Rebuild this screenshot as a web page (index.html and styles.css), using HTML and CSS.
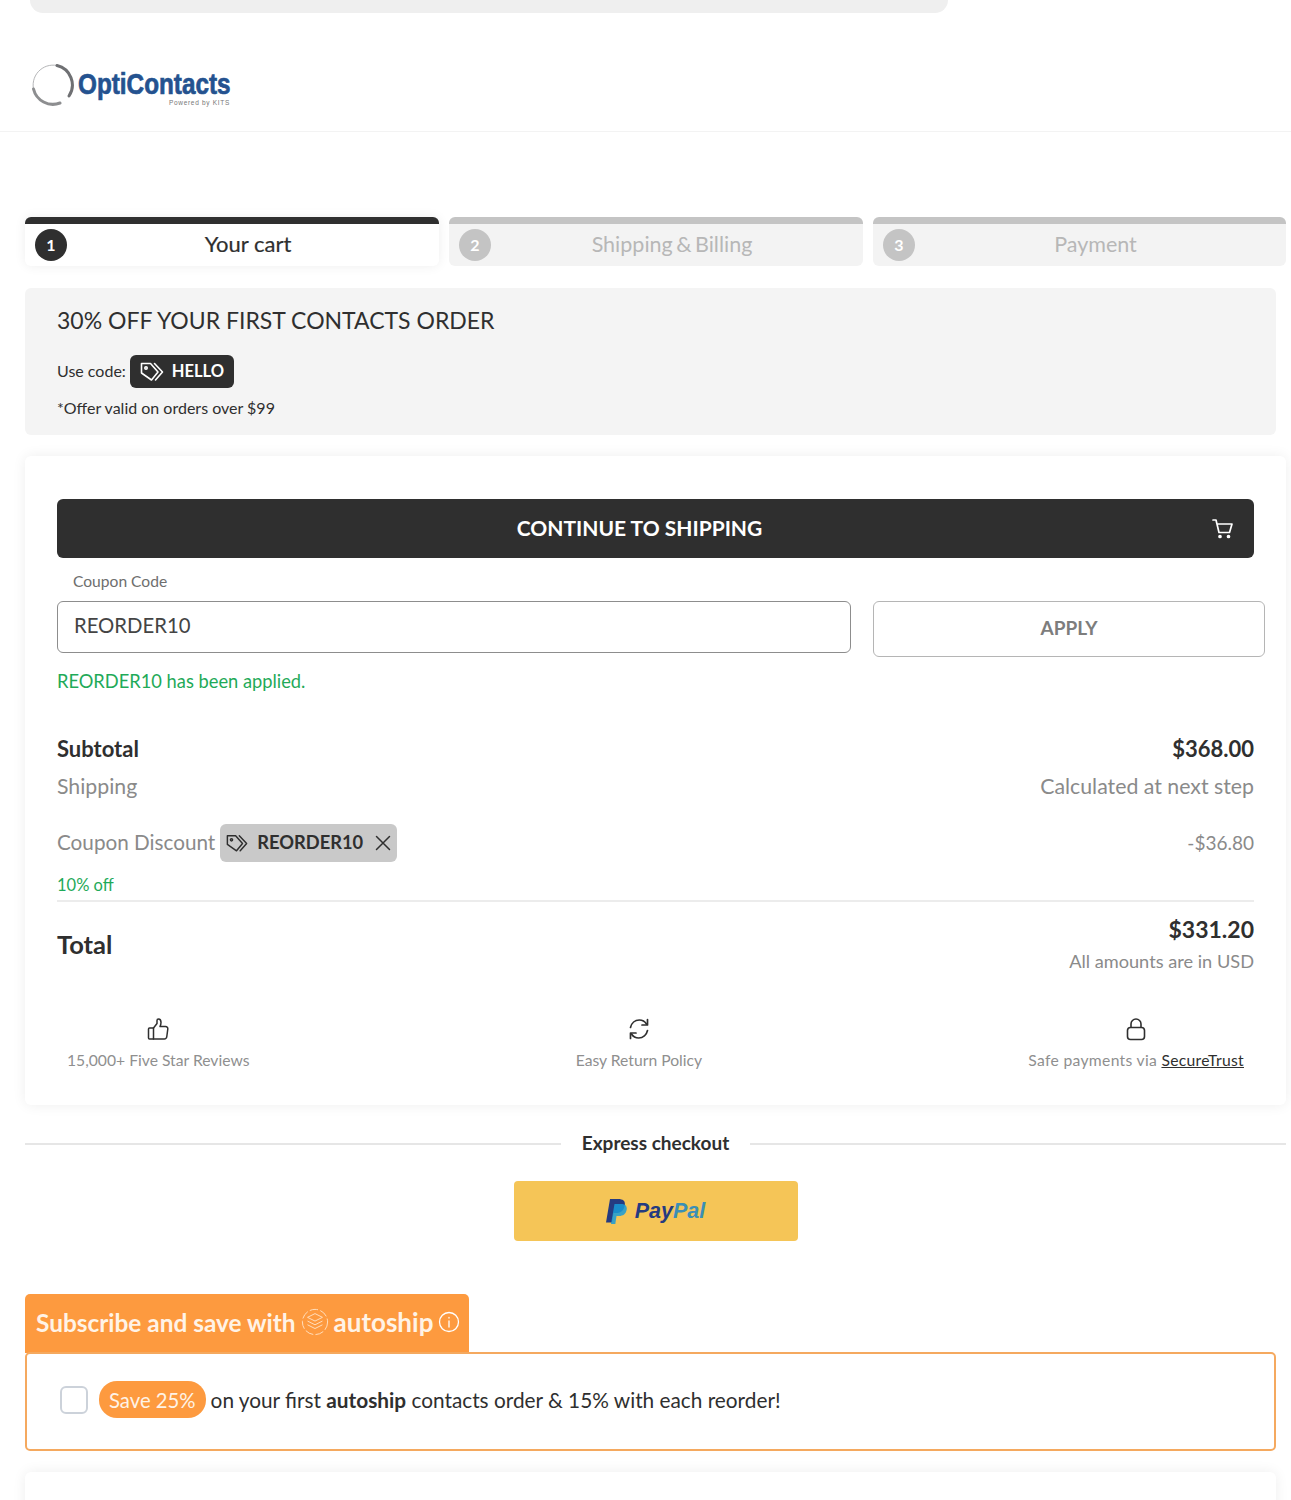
FILE: index.html
```html
<!DOCTYPE html>
<html lang="en">
<head>
  <meta charset="UTF-8" />
  <title>Your cart</title>
  <link rel="stylesheet" href="styles.css">
</head>
<body>
  <div class="top-pill"></div>

  <header class="site-header">
    <div class="logo">
      <svg class="logo-ring" width="44" height="44" viewBox="0 0 44 44" fill="none">
        <path d="M3 28 A20 20 0 0 1 26 2.500" stroke="#b5b6b8" stroke-width="1"/>
        <path d="M26 2.500 A20 20 0 0 1 38 33" stroke="#6f7073" stroke-width="3" stroke-linecap="round"/>
        <path d="M29 40 A20 20 0 0 1 2.500 26" stroke="#8d8e90" stroke-width="3" stroke-linecap="round"/>
      </svg>
      <div class="logo-text">
        <div class="logo-name">OptiContacts</div>
        <div class="logo-sub">Powered by KITS</div>
      </div>
    </div>
  </header>

  <main class="main">
    <div class="steps">
      <div class="step active"><span class="step-num">1</span><span class="step-label">Your cart</span></div>
      <div class="step"><span class="step-num">2</span><span class="step-label">Shipping &amp; Billing</span></div>
      <div class="step"><span class="step-num">3</span><span class="step-label">Payment</span></div>
    </div>

    <section class="promo">
      <h2 class="promo-title">30% OFF YOUR FIRST CONTACTS ORDER</h2>
      <div class="promo-code">
        <span class="use-code">Use code:</span>
        <span class="code-chip">
          <svg class="tag-icon" width="24" height="20" viewBox="0 0 24 20" fill="none" stroke="currentColor" stroke-width="1.600" stroke-linejoin="round" stroke-linecap="round">
            <path d="M1.500 1.500h9l7.500 8.500-6.500 8-10-7z"/>
            <path d="M14.500 1.500l8 8.500-7 8"/>
            <circle cx="6" cy="6" r="1.200"/>
          </svg>
          <span class="chip-text">HELLO</span>
        </span>
      </div>
      <p class="promo-note">*Offer valid on orders over $99</p>
    </section>

    <section class="card">
      <button class="continue-btn">
        CONTINUE TO SHIPPING
        <svg class="cart-icon" width="22" height="22" viewBox="0 0 22 22" fill="none" stroke="#fff" stroke-width="1.700" stroke-linecap="round" stroke-linejoin="round">
          <path d="M1 2h3l3 12.500h10.500L20 6H5"/>
          <circle cx="8" cy="18.500" r="1" fill="#fff"/>
          <circle cx="16.500" cy="18.500" r="1" fill="#fff"/>
        </svg>
      </button>

      <label class="coupon-label">Coupon Code</label>
      <div class="coupon-row">
        <div class="coupon-input">REORDER10</div>
        <button class="apply-btn">APPLY</button>
      </div>
      <p class="coupon-ok">REORDER10 has been applied.</p>

      <div class="line subtotal"><span>Subtotal</span><span>$368.00</span></div>
      <div class="line shipping"><span>Shipping</span><span>Calculated at next step</span></div>
      <div class="line discount">
        <div class="discount-left">
          <span class="discount-label">Coupon Discount</span>
          <span class="applied-chip">
            <svg class="tag-icon" width="22" height="19" viewBox="0 0 24 20" fill="none" stroke="currentColor" stroke-width="1.600" stroke-linejoin="round" stroke-linecap="round">
              <path d="M1.500 1.500h9l7.500 8.500-6.500 8-10-7z"/>
              <path d="M14.500 1.500l8 8.500-7 8"/>
              <circle cx="6" cy="6" r="1.200"/>
            </svg>
            <span class="applied-code">REORDER10</span>
            <svg width="16" height="16" viewBox="0 0 16 16" stroke="currentColor" stroke-width="1.500" stroke-linecap="round"><path d="M1.500 1.500l13 13M14.500 1.500l-13 13"/></svg>
          </span>
        </div>
        <span class="discount-amount">-$36.80</span>
      </div>
      <div class="off-note">10% off</div>

      <div class="total">
        <span class="total-label">Total</span>
        <div class="total-right">
          <div class="total-amount">$331.20</div>
          <div class="total-note">All amounts are in USD</div>
        </div>
      </div>

      <div class="trust">
        <div class="trust-item">
          <svg width="24" height="24" viewBox="0 0 24 24" fill="none" stroke="#2f2f2f" stroke-width="1.500" stroke-linejoin="round" stroke-linecap="round">
            <path d="M7.500 11v11H3.500a1 1 0 0 1-1-1v-9a1 1 0 0 1 1-1z"/>
            <path d="M7.500 11l3.500-4.500V3.500c0-1 .7-1.500 1.500-1.500 1.500 0 2.500 1.500 2.500 3.500 0 1.500-.5 3-1 4h5.500c1.500 0 2.500 1 2.300 2.500l-1 7.500c-.2 1.500-1 2.500-2.500 2.500H7.500"/>
          </svg>
          <span>15,000+ Five Star Reviews</span>
        </div>
        <div class="trust-item">
          <svg width="24" height="24" viewBox="0 0 24 24" fill="none" stroke="#2f2f2f" stroke-width="1.700" stroke-linejoin="round" stroke-linecap="round">
            <path d="M3.500 10.500C4.500 6 8 3 12.300 3c3.200 0 5.700 1.600 7.200 4"/>
            <path d="M20.500 2.500V8h-5.500"/>
            <path d="M20.500 13.500C19.500 18 16 21 11.700 21c-3.200 0-5.700-1.600-7.200-4"/>
            <path d="M3.500 21.500V16H9"/>
          </svg>
          <span>Easy Return Policy</span>
        </div>
        <div class="trust-item">
          <svg width="24" height="24" viewBox="0 0 24 24" fill="none" stroke="#2f2f2f" stroke-width="1.600" stroke-linejoin="round">
            <rect x="3.500" y="10.500" width="17" height="12" rx="3"/>
            <path d="M7 10.500V7a5 5 0 0 1 10 0v3.500"/>
          </svg>
          <span class="trust-safe">Safe payments via <a href="#" class="trust-link">SecureTrust</a></span>
        </div>
      </div>
    </section>

    <div class="express"><span>Express checkout</span></div>

    <button class="paypal-btn">
      <svg width="21" height="25" viewBox="0 0 21 25">
        <path d="M4 0h8c5 0 7.500 2 6.800 6C18 11.500 15 14 10 14H7.500L6 23.500H0z" fill="#253b80"/>
        <path d="M8.500 5h6.500c4 0 6.200 1.800 5.700 5.500-.7 4.500-3.700 6.500-7.700 6.500h-2.500L9.300 25H5z" fill="#179bd7" opacity=".85"/>
      </svg>
      <span class="pp-word"><span class="pp-pay">Pay</span><span class="pp-pal">Pal</span></span>
    </button>

    <div class="autoship-tab">
      <span>Subscribe and save with</span>
      <svg width="28" height="28" viewBox="0 0 30 30" fill="none" stroke="#ffe2c4" stroke-width="1">
        <circle cx="15" cy="15" r="13.500" stroke-dasharray="9 2.500"/>
        <path d="M15 6l8 4-8 4-8-4z"/>
        <path d="M7 14l8 4 8-4"/>
        <path d="M7 18l8 4 8-4"/>
      </svg>
      <span class="autoship-word">autoship</span>
      <svg width="22" height="22" viewBox="0 0 22 22" fill="none" stroke="#fff" stroke-width="1.300" stroke-linecap="round">
        <circle cx="11" cy="11" r="9.500"/>
        <path d="M11 10v6M11 6.500v.5"/>
      </svg>
    </div>
    <div class="autoship-box">
      <span class="checkbox"></span>
      <span class="save-pill">Save 25%</span>
      <span class="autoship-text">on your first <b>autoship</b> contacts order &amp; 15% with each reorder!</span>
    </div>

    <div class="next-card"></div>
  </main>
</body>
</html>
```

FILE: styles.css
```css
* {
  box-sizing: border-box;
}

html, body {
  height: 1500px;
  overflow: hidden;
}

body {
  margin: 0;
  background: #fff;
  color: #2f2f2f;
  font-family: 'Lato', sans-serif;
}

button {
  font-family: inherit;
  cursor: pointer;
}

.top-pill {
  width: 918px;
  height: 13px;
  margin-left: 30px;
  background: #efefef;
  border-radius: 0 0 22px 22px;
}

/* header */
.site-header {
  height: 119px;
  padding: 50px 0 0 31px;
  border-bottom: 1px solid #f3f3f3;
}

.logo {
  display: flex;
  align-items: flex-start;
}

.logo-ring {
  flex: none;
}

.logo-text {
  width: 152px;
  margin: 5px 0 0 3px;
  text-align: right;
}

.logo-name {
  color: #24528f;
  font-family: 'Liberation Sans', sans-serif;
  font-size: 30px;
  font-weight: 700;
  line-height: 31px;
  white-space: nowrap;
  text-align: left;
  transform: scaleX(0.81);
  transform-origin: left center;
  -webkit-text-stroke: 0.7px #24528f;
}

.logo-sub {
  color: #777;
  font-family: 'Liberation Sans', sans-serif;
  font-size: 6.500px;
  letter-spacing: 0.7px;
  line-height: 7px;
  margin-top: 0;
}

.main {
  padding: 85px 5px 0 25px;
}

/* steps */
.steps {
  display: grid;
  grid-template-columns: 414px 414px 413px;
  column-gap: 10px;
}

.step {
  height: 49px;
  display: flex;
  align-items: center;
  padding: 0 10px;
  background: #f3f3f3;
  border-top: 7px solid #c4c4c4;
  border-radius: 6px;
  color: #b7b7b7;
}

.step.active {
  background: #fff;
  border-top-color: #2f2f2f;
  color: #2f2f2f;
  box-shadow: 0 0 12px rgba(0, 0, 0, 0.07);
}

.step-num {
  flex: none;
  width: 32px;
  height: 32px;
  border-radius: 50%;
  display: flex;
  align-items: center;
  justify-content: center;
  background: #c4c4c4;
  color: #fff;
  font-size: 16px;
  font-weight: 700;
  padding-bottom: 2px;
}

.step.active .step-num {
  background: #2f2f2f;
}

.step-label {
  flex: 1;
  text-align: center;
  font-size: 21.500px;
  word-spacing: -2px;
  padding-bottom: 3px;
}

.step.active .step-label {
  font-size: 22px;
  word-spacing: 0;
  -webkit-text-stroke: 0.2px #2f2f2f;
}

/* promo */
.promo {
  width: 1251px;
  height: 147px;
  margin-top: 22px;
  padding: 16px 32px 0;
  background: #f4f4f4;
  border-radius: 6px;
}

.promo-title {
  margin: 0;
  font-size: 23px;
  font-weight: 400;
  line-height: 32px;
}

.promo-code {
  display: flex;
  align-items: center;
  gap: 4px;
  margin-top: 19px;
  font-size: 16px;
}

.use-code {
  padding-bottom: 2px;
}

.code-chip {
  display: flex;
  align-items: center;
  gap: 8px;
  height: 33px;
  padding: 0 10px;
  background: #2f2f2f;
  color: #fff;
  border-radius: 6px;
  font-weight: 700;
  font-size: 16.500px;
}

.chip-text {
  padding-bottom: 2px;
}

.promo-note {
  margin: 10px 0 0;
  font-size: 16px;
  line-height: 20px;
}

/* main card */
.card {
  height: 649px;
  margin-top: 21px;
  padding: 43px 32px 0;
  background: #fff;
  border-radius: 6px;
  box-shadow: 0 0 14px rgba(0, 0, 0, 0.07);
}

.continue-btn {
  position: relative;
  display: block;
  width: 100%;
  height: 59px;
  background: #2f2f2f;
  color: #fff;
  border: 0;
  border-radius: 6px;
  font-size: 21px;
  font-weight: 700;
  padding: 0 32px 3px 0;
}

.cart-icon {
  position: absolute;
  right: 20px;
  top: 19px;
}

.coupon-label {
  display: block;
  margin: 13px 0 0 16px;
  color: #6e6e6e;
  font-size: 15.600px;
  line-height: 20px;
}

.coupon-row {
  display: grid;
  grid-template-columns: 794px 392px;
  column-gap: 22px;
  align-items: start;
  margin: 10px -10px 0 0;
}

.coupon-input {
  height: 52px;
  line-height: 47px;
  padding: 0 16px;
  border: 1.500px solid #8d8d8d;
  border-radius: 6px;
  font-size: 20.300px;
  color: #444;
}

.apply-btn {
  height: 56px;
  background: #fff;
  border: 1.500px solid #b5b5b5;
  border-radius: 6px;
  color: #7d7d7d;
  font-size: 19px;
  font-weight: 700;
  padding: 0 0 4px;
}

.coupon-ok {
  margin: 12px 0 0;
  color: #1faa59;
  font-size: 18.300px;
  line-height: 24px;
}

.line {
  display: flex;
  justify-content: space-between;
  align-items: center;
}

.subtotal {
  margin-top: 42px;
  font-size: 22px;
  font-weight: 700;
  line-height: 28px;
}

.shipping {
  margin-top: 9px;
  color: #8a8a8a;
  font-size: 21.300px;
  line-height: 28px;
}

.discount {
  height: 38px;
  margin-top: 24px;
  color: #8a8a8a;
  font-size: 20.700px;
}

.discount-left {
  display: flex;
  align-items: center;
  gap: 5px;
}

.applied-chip {
  display: flex;
  align-items: center;
  height: 38px;
  padding: 0 6px 0 6px;
  background: #c9c9c9;
  border-radius: 6px;
  color: #2f2f2f;
}

.applied-code {
  margin: 0 12px 0 9px;
  font-size: 18.300px;
  font-weight: 700;
  padding-bottom: 2px;
}

.discount-label,
.discount-amount {
  padding-bottom: 2px;
}

.discount-amount {
  font-size: 19px;
}

.off-note {
  height: 29px;
  margin-top: 11px;
  padding-bottom: 3px;
  border-bottom: 2px solid #ececec;
  color: #1faa59;
  font-size: 16.500px;
  line-height: 24px;
}

.total {
  display: flex;
  justify-content: space-between;
  align-items: flex-start;
  margin-top: 12px;
}

.total-label {
  margin-top: 15px;
  font-size: 25.500px;
  font-weight: 700;
  line-height: 30px;
}

.total-right {
  text-align: right;
}

.total-amount {
  font-size: 23px;
  font-weight: 700;
  line-height: 30px;
}

.total-note {
  margin-top: 1px;
  color: #8a8a8a;
  font-size: 18.200px;
  line-height: 32px;
}

.trust {
  display: flex;
  justify-content: space-between;
  margin-top: 40px;
  padding: 0 10px;
}

.trust-item {
  display: flex;
  flex-direction: column;
  align-items: center;
  gap: 9px;
  color: #8f8f8f;
  font-size: 15.700px;
  line-height: 20px;
}

.trust-safe {
  letter-spacing: 0.3px;
}

.trust-link {
  color: #2f2f2f;
}

/* express */
.express {
  display: flex;
  align-items: center;
  gap: 21px;
  margin-top: 26px;
  font-size: 19px;
  font-weight: 700;
  line-height: 24px;
}

.express span {
  padding-bottom: 2px;
}

.express::before,
.express::after {
  content: "";
  flex: 1;
  height: 2px;
  background: #e6e6e6;
}

.paypal-btn {
  display: flex;
  align-items: center;
  justify-content: center;
  gap: 8px;
  width: 284px;
  height: 60px;
  margin: 24px auto 0;
  background: #f5c557;
  border: 0;
  border-radius: 4px;
  font-family: 'Liberation Sans', sans-serif;
  font-size: 21.500px;
  font-style: italic;
  font-weight: 700;
}

.pp-pay {
  color: #253b80;
}

.pp-pal {
  color: #3b8fb5;
}

/* autoship */
.autoship-tab {
  display: flex;
  align-items: center;
  gap: 5px;
  width: 444px;
  height: 59px;
  margin-top: 53px;
  padding: 0 0 3px 11px;
  background: #fd9a3f;
  border-radius: 5px 5px 0 0;
  color: #fff3e6;
  font-size: 24.400px;
  font-weight: 700;
  white-space: nowrap;
}

.autoship-word {
  font-size: 26px;
}

.autoship-box {
  display: flex;
  align-items: center;
  width: 1251px;
  height: 99px;
  margin-top: -1px;
  padding: 0 33px 4px;
  background: #fff;
  border: 2px solid #f5a95f;
  border-radius: 5px;
  font-size: 20.800px;
}

.checkbox {
  flex: none;
  width: 28px;
  height: 28px;
  background: #fff;
  border: 2px solid #ccd2da;
  border-radius: 6px;
  margin-right: 11px;
}

.save-pill {
  display: flex;
  align-items: center;
  height: 37px;
  padding: 0 10px;
  margin-right: 5px;
  background: #fd9a3f;
  color: #fff3e6;
  border-radius: 18px;
  font-size: 20.300px;
}

.next-card {
  width: 1251px;
  height: 80px;
  margin-top: 21px;
  background: #fff;
  border-radius: 6px;
  box-shadow: 0 0 14px rgba(0, 0, 0, 0.07);
}
```
